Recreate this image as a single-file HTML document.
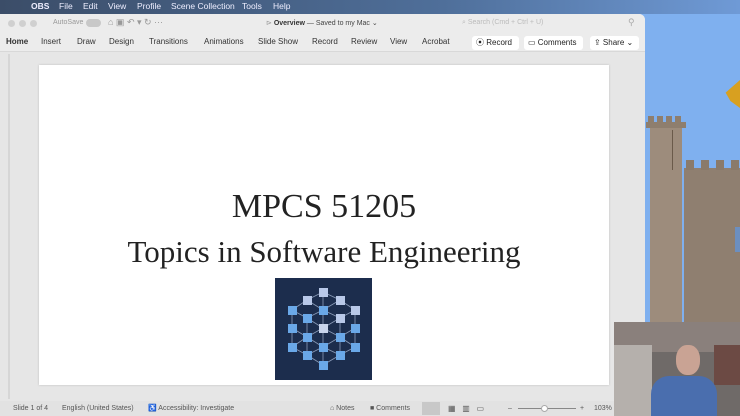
<!DOCTYPE html><html><head><meta charset="utf-8"><style>
*{margin:0;padding:0;box-sizing:border-box}
body{width:740px;height:416px;overflow:hidden;position:relative;font-family:"Liberation Sans",sans-serif;background:#7fb0ef}
.abs{position:absolute}
#menu{left:0;top:0;width:740px;height:14px;background:linear-gradient(90deg,#3b4d68,#4f6f9a 60%,#6f9ad6);color:#eef;font-size:8.5px;line-height:13px}
#menu span{position:absolute;top:0}
#win{left:0;top:14px;width:645px;height:388px;background:#e6e6e6;border-radius:0 6px 0 0}
#title{left:0;top:14px;width:645px;height:19px;background:#ececec;border-radius:0 6px 0 0;font-size:7px;color:#666}
#ribbon{left:0;top:33px;width:645px;height:19px;background:#ececec;font-size:8px;color:#333;border-bottom:1px solid #d8d8d8}
#ribbon span{position:absolute;top:4px}
.btn{position:absolute;top:3px;height:14px;background:#fff;border-radius:3px;font-size:8px;line-height:14px;color:#222;padding-left:4px}
#slide{left:39px;top:65px;width:570px;height:320px;background:#fff;box-shadow:0 0 2px #bbb}
.t1{position:absolute;left:0;width:570px;text-align:center;font-family:"Liberation Serif",serif;color:#222}
#status{left:0;top:401px;width:614px;height:15px;background:#e2e2e2;font-size:7px;color:#555;line-height:15px}
#status span{position:absolute;top:0}
</style></head><body>
<div id="menu" class="abs">
<span style="left:11px;font-size:10px"></span><span style="left:31px;font-weight:bold">OBS</span><span style="left:59px">File</span><span style="left:83px">Edit</span><span style="left:108px">View</span><span style="left:137px">Profile</span><span style="left:171px">Scene Collection</span><span style="left:242px">Tools</span><span style="left:273px">Help</span></div>
<div id="win" class="abs"></div>
<div id="title" class="abs">
<div class="abs" style="left:8px;top:6px;width:7px;height:7px;border-radius:50%;background:#d0d0d0"></div>
<div class="abs" style="left:19px;top:6px;width:7px;height:7px;border-radius:50%;background:#d0d0d0"></div>
<div class="abs" style="left:30px;top:6px;width:7px;height:7px;border-radius:50%;background:#d0d0d0"></div>
<span class="abs" style="left:53px;top:5px;color:#999">AutoSave</span>
<div class="abs" style="left:86px;top:5px;width:15px;height:8px;border-radius:4px;background:#c8c8c8"></div>
<span class="abs" style="left:108px;top:3px;color:#999;font-size:9px">⌂ ▣ ↶ ▾ ↻ ···</span>
<span class="abs" style="left:266px;top:5px;color:#444"><span style="color:#999">⊳ </span><b style="color:#333">Overview</b> — Saved to my Mac ⌄</span>
<span class="abs" style="left:462px;top:5px;color:#bbb">⌕ Search (Cmd + Ctrl + U)</span>
<span class="abs" style="left:628px;top:3px;color:#aaa;font-size:9px">⚲</span>
</div>
<div id="ribbon" class="abs">
<span style="left:6px;font-weight:bold">Home</span><span style="left:41px">Insert</span><span style="left:77px">Draw</span><span style="left:109px">Design</span><span style="left:149px">Transitions</span><span style="left:204px">Animations</span><span style="left:258px">Slide Show</span><span style="left:312px">Record</span><span style="left:351px">Review</span><span style="left:390px">View</span><span style="left:422px">Acrobat</span>
<div class="btn" style="left:472px;width:47px">⦿ Record</div>
<div class="btn" style="left:524px;width:59px">▭ Comments</div>
<div class="btn" style="left:590px;width:49px">⇪ Share ⌄</div>
</div>
<div class="abs" style="left:8px;top:54px;width:2px;height:345px;background:#d6d6d6"></div>
<div id="slide" class="abs">
<div class="t1" style="top:123px;font-size:34px">MPCS 51205</div>
<div class="t1" style="top:169px;font-size:31px">Topics in Software Engineering</div>
<svg class="abs" style="left:236px;top:213px" width="97" height="102" viewBox="0 0 97 102">
<rect width="97" height="102" fill="#1c2d4d"/>
<g stroke="#8a9bb8" stroke-width="0.8" fill="none">
<path d="M48 14L32 22L17 32L17 50L17 69L32 77L48 87L65 77L80 69L80 50L80 32L65 22Z M48 14L48 32L48 50L48 69L48 87 M17 32L32 40L48 50L65 40L80 32 M17 50L32 59L48 69L65 59L80 50 M32 22L48 32L65 22 M32 40L32 77 M65 40L65 77 M17 69L32 59 M80 69L65 59 M32 40L48 32L65 40 M48 50L32 59 M48 50L65 59 M32 77L48 69L65 77"/></g>
<g fill="#6aa8e8">
<rect x="44" y="10" width="9" height="9" fill="#b8c8e8"/><rect x="28" y="18" width="9" height="9" fill="#b8c8e8"/><rect x="61" y="18" width="9" height="9" fill="#b8c8e8"/>
<rect x="13" y="28" width="9" height="9"/><rect x="44" y="28" width="9" height="9"/><rect x="76" y="28" width="9" height="9" fill="#b8c8e8"/>
<rect x="28" y="36" width="9" height="9"/><rect x="61" y="36" width="9" height="9" fill="#b8c8e8"/>
<rect x="13" y="46" width="9" height="9"/><rect x="44" y="46" width="9" height="9" fill="#c8d4ec"/><rect x="76" y="46" width="9" height="9"/>
<rect x="28" y="55" width="9" height="9"/><rect x="61" y="55" width="9" height="9"/>
<rect x="13" y="65" width="9" height="9"/><rect x="44" y="65" width="9" height="9"/><rect x="76" y="65" width="9" height="9"/>
<rect x="28" y="73" width="9" height="9"/><rect x="61" y="73" width="9" height="9"/><rect x="44" y="83" width="9" height="9"/>
</g></svg>
</div>
<div id="status" class="abs">
<span style="left:13px">Slide 1 of 4</span><span style="left:62px">English (United States)</span><span style="left:148px">♿ Accessibility: Investigate</span>
<span style="left:330px">⌂ Notes</span><span style="left:370px">■ Comments</span>
<span style="left:422px;width:18px;height:13px;top:1px;background:#c8c8c8"></span>
<span style="left:448px;font-size:8px">▦ &nbsp; ▥ &nbsp; ▭</span>
<span style="left:508px">–</span><div class="abs" style="left:518px;top:7px;width:58px;height:1px;background:#888"></div><div class="abs" style="left:541px;top:4px;width:7px;height:7px;border-radius:50%;background:#fff;border:1px solid #aaa"></div>
<span style="left:580px">+</span><span style="left:594px">103%</span></div>
<!-- castle -->
<div class="abs" style="left:684px;top:168px;width:56px;height:160px;background:#8f7f70"></div>
<div class="abs" style="left:686px;top:160px;width:54px;height:10px;background:repeating-linear-gradient(90deg,#8a7a6a 0 8px,transparent 8px 15px)"></div>
<div class="abs" style="left:650px;top:125px;width:32px;height:200px;background:#9d8c7c"></div>
<div class="abs" style="left:648px;top:116px;width:36px;height:12px;background:repeating-linear-gradient(90deg,#8e7e6e 0 6px,#7fb0ef 6px 9px)"></div>
<div class="abs" style="left:646px;top:122px;width:40px;height:6px;background:#8e7e6e"></div>
<div class="abs" style="left:672px;top:130px;width:1px;height:40px;background:#6a5a4a"></div>
<div class="abs" style="left:735px;top:227px;width:5px;height:25px;background:#6c8fc0"></div>
<div class="abs" style="left:724px;top:80px;width:16px;height:28px;background:#d8a020;clip-path:polygon(10% 45%,100% 0,100% 100%,40% 75%)"></div>
<!-- webcam -->
<div class="abs" style="left:614px;top:322px;width:126px;height:94px;background:#6f6a68"></div>
<div class="abs" style="left:614px;top:322px;width:126px;height:30px;background:#8a807c"></div>
<div class="abs" style="left:614px;top:345px;width:38px;height:71px;background:#b5b0ac"></div>
<div class="abs" style="left:714px;top:345px;width:26px;height:40px;background:#6c4a44"></div>
<div class="abs" style="left:676px;top:345px;width:24px;height:30px;border-radius:45%;background:#c9a394"></div>
<div class="abs" style="left:651px;top:376px;width:66px;height:40px;border-radius:18px 18px 0 0;background:#4a6eae"></div>
</body></html>
